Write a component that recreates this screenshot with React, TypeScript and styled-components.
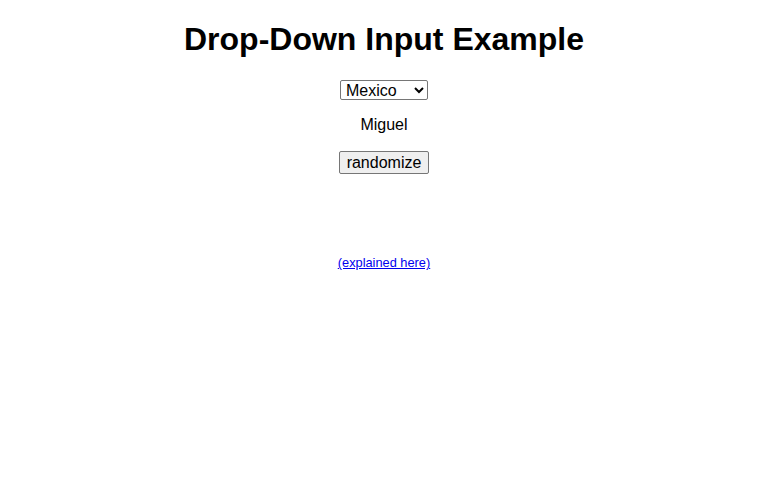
import { FC, useState } from 'react';
import styled, { createGlobalStyle } from 'styled-components';

const GlobalStyle = createGlobalStyle`
    body {
        margin: 8px;
        background: #ffffff;
        font-family: 'Liberation Sans', Arial, sans-serif;
        color: #000000;
    }
`;

const Page = styled.div`
    display: flex;
    flex-direction: column;
    align-items: center;
    text-align: center;
`;

const Title = styled.h1`
    font-size: 32px;
    font-weight: 700;
    margin: 13px 0 22px;
`;

const CountrySelect = styled.select`
    font-family: 'Liberation Sans', Arial, sans-serif;
    font-size: 16px;
    width: 88px;
    height: 20px;
    padding: 0 0 0 1px;
    border: 1px solid #767676;
    border-radius: 2px;
    background: #ffffff;
    color: #000000;
`;

const Name = styled.p`
    font-size: 16px;
    margin: 16px 0 17px;
`;

const RandomButton = styled.button`
    font-family: 'Liberation Sans', Arial, sans-serif;
    font-size: 16px;
    height: 23px;
    padding: 1px 7px;
    border: 1px solid #767676;
    border-radius: 2px;
    background: #efefef;
    color: #000000;
`;

const Footer = styled.div`
    margin-top: 81px;
    font-size: 12.8px;
`;

const ExplainLink = styled.a`
    color: #0000ee;
`;

const names: Record<string, string[]> = {
    Mexico: ['Miguel', 'Sofia', 'Santiago', 'Valentina'],
    Canada: ['Liam', 'Olivia', 'Noah', 'Emma'],
    France: ['Louis', 'Jade', 'Gabriel', 'Louise'],
    Japan: ['Haruto', 'Yui', 'Sota', 'Hina'],
};

const App: FC = () => {
    const [country, setCountry] = useState('Mexico');
    const [index, setIndex] = useState(0);
    const list = names[country];

    const randomize = () => {
        const keys = Object.keys(names);
        setCountry(keys[Math.floor(Math.random() * keys.length)]);
        setIndex(Math.floor(Math.random() * 4));
    };

    return (
        <Page>
            <GlobalStyle />
            <Title>Drop-Down Input Example</Title>
            <CountrySelect value={country} onChange={(e) => setCountry(e.target.value)}>
                {Object.keys(names).map((c) => (
                    <option key={c} value={c}>
                        {c}
                    </option>
                ))}
            </CountrySelect>
            <Name>{list[index % list.length]}</Name>
            <RandomButton onClick={randomize}>randomize</RandomButton>
            <Footer>
                <ExplainLink href="#">(explained here)</ExplainLink>
            </Footer>
        </Page>
    );
};

export default App;
